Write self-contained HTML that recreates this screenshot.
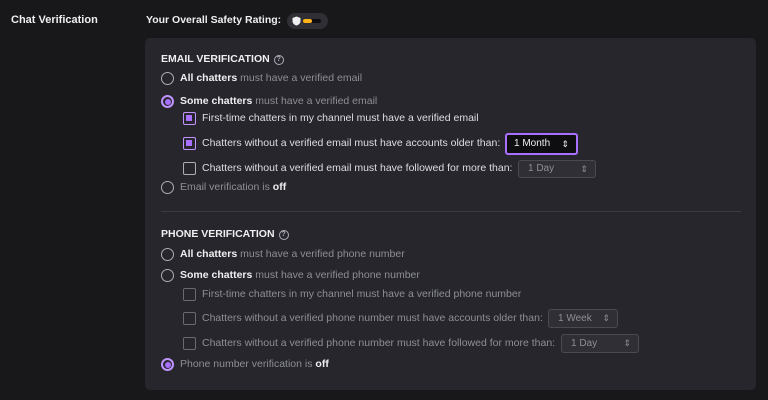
<!DOCTYPE html><html><head><style>
*{margin:0;padding:0;box-sizing:border-box}
body{width:768px;height:400px;background:#18181b;font-family:"Liberation Sans",sans-serif;color:#dedee3;font-size:10.5px;position:relative;overflow:hidden}
.a{position:absolute;white-space:nowrap;line-height:12px}
b{font-weight:bold;color:#efeff1}
.panel{position:absolute;left:145px;top:38px;width:611px;height:352px;background:#26262c;border-radius:5px}
.r{position:absolute;width:13px;height:13px;border:1.5px solid #adadb8;border-radius:50%}
.r.on{border-color:#bf94ff;border-width:2px}
.r.on::after{content:"";position:absolute;left:1.5px;top:1.5px;width:6px;height:6px;border-radius:50%;background:#a970ff}
.c{position:absolute;width:13px;height:13px;border:1.5px solid #adadb8;border-radius:2px}
.c.on{border-color:#bf94ff}
.c.on::after{content:"";position:absolute;left:2px;top:2px;width:6px;height:6px;background:#a970ff}
.c.dis{border-color:#6a6a72}
.dim{color:#8e8e96}
.s{position:absolute;border:1px solid #4a4a52;border-radius:3px;background:#2f2f35;color:#8e8e96;font-size:10px;padding-left:9px;line-height:16px}
.s::after{content:"⇕";position:absolute;right:7px;top:0;font-size:9px}
.q{display:inline-block;width:10px;height:10px;border:1px solid #adadb8;border-radius:50%;font-size:7px;line-height:8px;text-align:center;margin-left:4px;vertical-align:1px;color:#adadb8;font-weight:bold}
</style></head><body>
<div class="a" style="left:11px;top:14px;font-weight:bold;color:#efeff1;font-size:11px">Chat Verification</div>
<div class="a" style="left:146px;top:14px;font-weight:bold;color:#efeff1;font-size:10.5px">Your Overall Safety Rating:</div>
<div style="position:absolute;left:287px;top:13px;width:41px;height:16px;border-radius:8px;background:#2f2f35">
<svg style="position:absolute;left:5px;top:3px" width="9" height="10" viewBox="0 0 9 10"><path d="M4.5 0.5L8.5 2v3c0 2.5-2 4-4 4.5C2.5 9 0.5 7.5 0.5 5V2z" fill="#efeff1"/></svg>
<div style="position:absolute;left:16px;top:6px;width:18px;height:4px;border-radius:2px;background:#0e0e10"><div style="width:9px;height:4px;border-radius:2px;background:#ffb31a"></div></div></div>
<div class="panel"></div>
<div class="a" style="left:161px;top:53px;font-weight:bold;color:#efeff1;font-size:10.5px">EMAIL VERIFICATION<span class="q">?</span></div>
<div class="r" style="left:161px;top:72px"></div><div class="a dim" style="left:180px;top:72px"><b>All chatters</b> must have a verified email</div>
<div class="r on" style="left:161px;top:95px"></div><div class="a dim" style="left:180px;top:95px"><b>Some chatters</b> must have a verified email</div>
<div class="c on" style="left:183px;top:112px"></div><div class="a" style="left:202px;top:112px">First-time chatters in my channel must have a verified email</div>
<div class="c on" style="left:183px;top:137px"></div><div class="a" style="left:202px;top:137px">Chatters without a verified email must have accounts older than:</div>
<div class="s" style="left:505px;top:133px;width:73px;height:22px;border:2px solid #a970ff;background:#0e0e10;color:#efeff1;line-height:18px;padding-left:7px">1 Month</div>
<div class="c" style="left:183px;top:162px"></div><div class="a" style="left:202px;top:162px">Chatters without a verified email must have followed for more than:</div>
<div class="s" style="left:518px;top:160px;width:78px;height:18px">1 Day</div>
<div class="r" style="left:161px;top:181px"></div><div class="a dim" style="left:180px;top:181px">Email verification is <b>off</b></div>
<div style="position:absolute;left:161px;top:211px;width:580px;height:1px;background:#3a3a40"></div>
<div class="a" style="left:161px;top:228px;font-weight:bold;color:#efeff1">PHONE VERIFICATION<span class="q">?</span></div>
<div class="r" style="left:161px;top:248px"></div><div class="a dim" style="left:180px;top:248px"><b>All chatters</b> must have a verified phone number</div>
<div class="r" style="left:161px;top:269px"></div><div class="a dim" style="left:180px;top:269px"><b>Some chatters</b> must have a verified phone number</div>
<div class="c dis" style="left:183px;top:288px"></div><div class="a dim" style="left:202px;top:288px">First-time chatters in my channel must have a verified phone number</div>
<div class="c dis" style="left:183px;top:312px"></div><div class="a dim" style="left:202px;top:312px">Chatters without a verified phone number must have accounts older than:</div>
<div class="s" style="left:548px;top:309px;width:70px;height:19px;line-height:17px">1 Week</div>
<div class="c dis" style="left:183px;top:337px"></div><div class="a dim" style="left:202px;top:337px">Chatters without a verified phone number must have followed for more than:</div>
<div class="s" style="left:561px;top:334px;width:78px;height:19px;line-height:17px">1 Day</div>
<div class="r on" style="left:161px;top:358px"></div><div class="a dim" style="left:180px;top:358px">Phone number verification is <b>off</b></div>
</body></html>
